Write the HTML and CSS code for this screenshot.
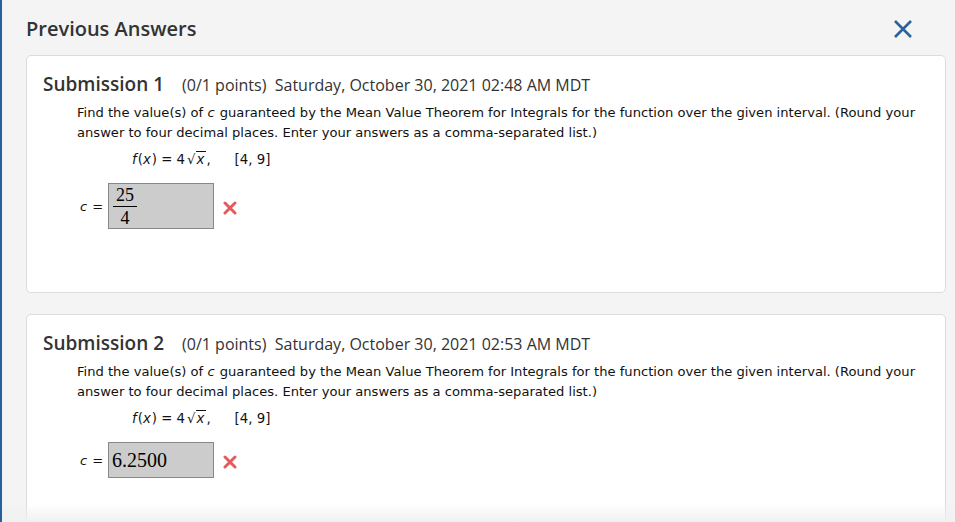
FILE: index.html
```html
<!DOCTYPE html>
<html>
<head>
<meta charset="utf-8">
<link rel="stylesheet" href="styles.css">
</head>
<body>
<div class="page">
  <div class="header">
    <h1 class="title">Previous Answers</h1>
    <button class="close" aria-label="Close">
      <svg width="20" height="20" viewBox="0 0 20 20"><path d="M2 2 L18 18 M18 2 L2 18" stroke="#2b619d" stroke-width="2.6" fill="none"/></svg>
    </button>
  </div>

  <div class="card">
    <div class="sub-head"><span class="sub-num">Submission 1</span><span class="sub-meta">(0/1 points)&nbsp; Saturday, October 30, 2021 02:48 AM MDT</span></div>
    <p class="question">Find the value(s) of <span class="var">c</span> guaranteed by the Mean Value Theorem for Integrals for the function over the given interval. (Round your answer to four decimal places. Enter your answers as a comma-separated list.)</p>
    <div class="formula"><span class="var">f</span>(<span class="var">x</span>) = 4<span class="sqrt">√<span class="rad"><span class="var">x</span></span></span>,<span class="interval">[4, 9]</span></div>
    <div class="answer">
      <span class="clabel"><span class="var">c</span> =</span>
      <div class="box box-frac">
        <span class="frac"><span class="num">25</span><span class="den">4</span></span>
      </div>
      <svg class="wrong" width="14" height="14" viewBox="0 0 14 14"><path d="M2 2 L12 12 M12 2 L2 12" stroke="#e35b5b" stroke-width="3" stroke-linecap="round" fill="none"/></svg>
    </div>
  </div>

  <div class="card">
    <div class="sub-head"><span class="sub-num">Submission 2</span><span class="sub-meta">(0/1 points)&nbsp; Saturday, October 30, 2021 02:53 AM MDT</span></div>
    <p class="question">Find the value(s) of <span class="var">c</span> guaranteed by the Mean Value Theorem for Integrals for the function over the given interval. (Round your answer to four decimal places. Enter your answers as a comma-separated list.)</p>
    <div class="formula"><span class="var">f</span>(<span class="var">x</span>) = 4<span class="sqrt">√<span class="rad"><span class="var">x</span></span></span>,<span class="interval">[4, 9]</span></div>
    <div class="answer answer-dec">
      <span class="clabel"><span class="var">c</span> =</span>
      <div class="box box-dec">6.2500</div>
      <svg class="wrong" width="14" height="14" viewBox="0 0 14 14"><path d="M2 2 L12 12 M12 2 L2 12" stroke="#e35b5b" stroke-width="3" stroke-linecap="round" fill="none"/></svg>
    </div>
  </div>
</div>
<div class="fade"></div>
</body>
</html>
```

FILE: styles.css
```css
html, body {
  margin: 0;
  padding: 0;
  height: 100%;
  overflow: hidden;
}
body {
  background: #f4f4f4;
  border-left: 2px solid #2a5f9e;
  box-sizing: border-box;
  font-family: "Open Sans", "Liberation Sans", sans-serif;
  color: #333;
}
.page {
  padding: 0 9px 0 24px;
}
.header {
  display: flex;
  align-items: center;
  justify-content: space-between;
  height: 55px;
}
.title {
  margin: 0;
  font-size: 20px;
  font-weight: 600;
  color: #333;
  line-height: 24px;
  position: relative;
  top: 1px;
}
.close {
  background: none;
  border: 0;
  padding: 0;
  margin-right: 33px;
  width: 20px;
  height: 20px;
  display: flex;
  position: relative;
  top: 1px;
}
.card {
  background: #fff;
  border: 1px solid #dcdcdc;
  border-radius: 5px;
  padding: 16px 16px 63px 16px;
  margin-bottom: 21px;
}
.sub-head {
  display: flex;
  align-items: baseline;
  line-height: 24px;
}
.sub-num {
  font-size: 19px;
  font-weight: 600;
  color: #333;
  margin-right: 18px;
}
.sub-meta {
  font-size: 16px;
  color: #333;
}
.var {
  font-style: italic;
  padding-right: 1px;
}
.question {
  margin: 6px 0 0 34px;
  font-family: "DejaVu Sans", sans-serif;
  font-size: 13.1px;
  line-height: 20px;
  color: #111;
  max-width: 860px;
}
.formula {
  margin: 7px 0 0 89px;
  font-family: "DejaVu Sans", sans-serif;
  font-size: 13.3px;
  line-height: 20px;
  color: #111;
}
.sqrt {
  margin-left: 2px;
}
.rad {
  border-top: 1px solid #111;
  padding: 0 1px;
}
.interval {
  margin-left: 24px;
}
.answer {
  display: flex;
  align-items: center;
  margin: 13px 0 0 37px;
}
.clabel {
  font-family: "DejaVu Sans", sans-serif;
  font-size: 13px;
  color: #111;
  width: 28px;
  white-space: nowrap;
}
.box {
  box-sizing: border-box;
  width: 106px;
  background: #cccccc;
  border: 1px solid #888;
  font-family: "Liberation Serif", "Times New Roman", serif;
  color: #000;
}
.box-frac {
  height: 46px;
  display: flex;
  align-items: center;
  padding-left: 4px;
}
.frac {
  display: inline-flex;
  flex-direction: column;
  align-items: center;
  font-size: 18px;
  line-height: 20px;
}
.num {
  border-bottom: 1px solid #000;
  padding: 0 3px 1px;
}
.den {
  padding-top: 1px;
}
.box-dec {
  height: 36px;
  font-size: 20px;
  line-height: 34px;
  padding-left: 3px;
}
.wrong {
  margin-left: 9px;
  margin-top: 4px;
}
.fade {
  position: fixed;
  left: 2px;
  right: 0;
  bottom: 0;
  height: 18px;
  background: linear-gradient(rgba(244,244,244,0), rgba(240,240,240,1));
}
```
